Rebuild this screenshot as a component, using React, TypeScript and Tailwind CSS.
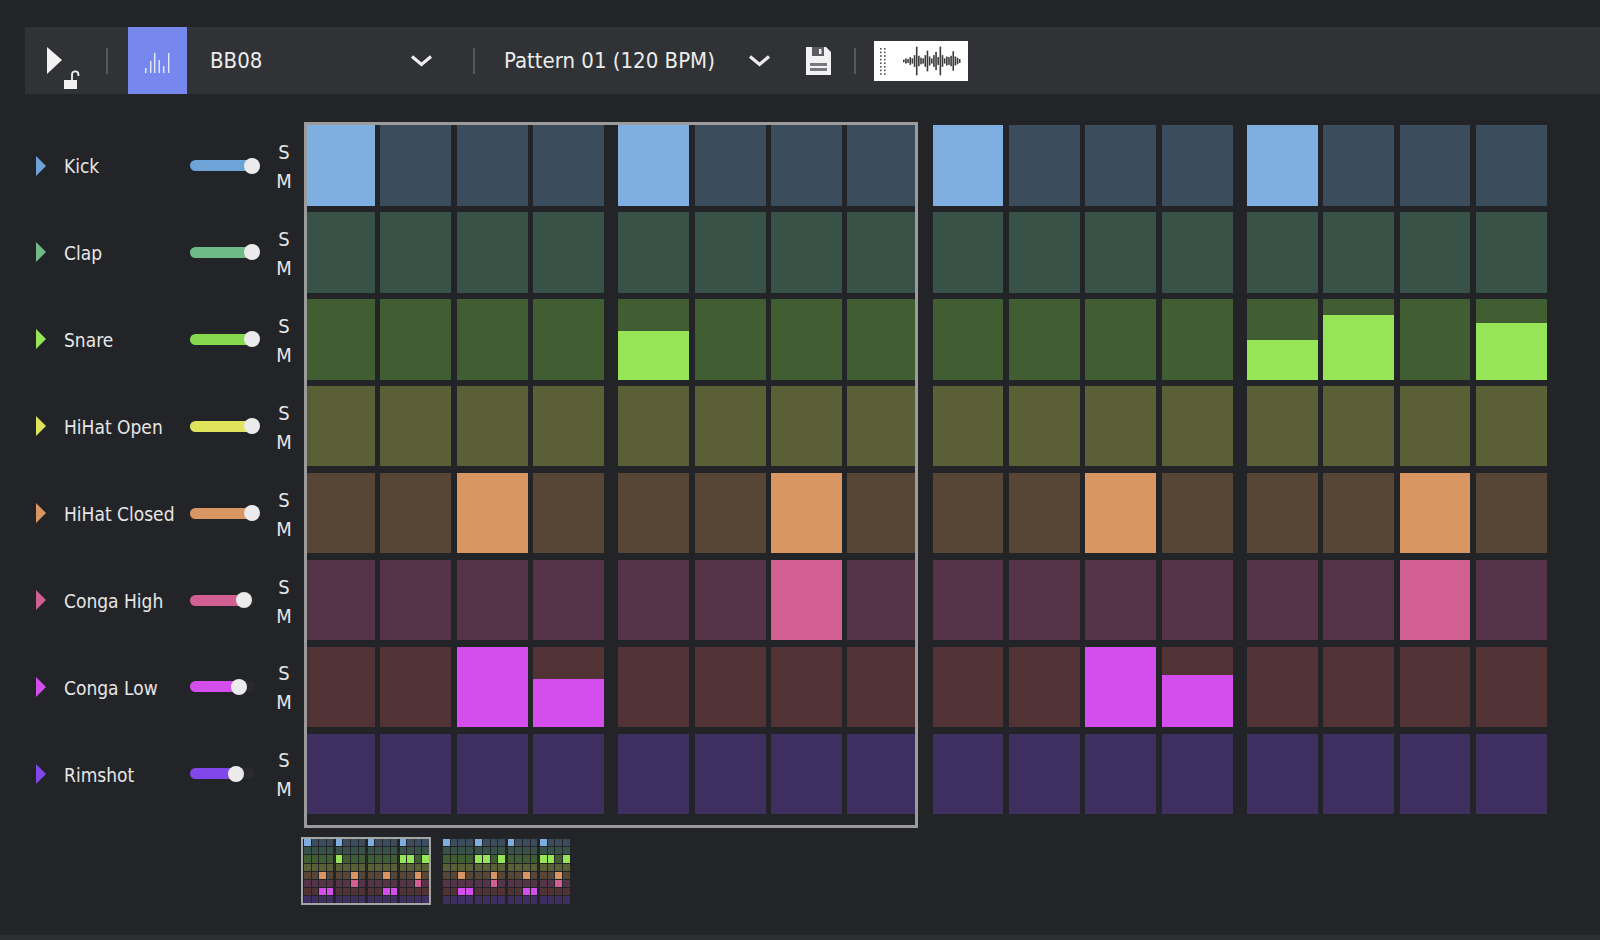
import { Fragment } from 'react';

type Track = {
  name: string;
  dim: string;
  on: string;
  fill: string;
  arrow: string;
  thumb: number; // slider fill width in px
  // step index -> height of the lit part in px
  steps: Record<number, number>;
};

const FULL = 80.4;

const tracks: Track[] = [
  {
    name: 'Kick',
    dim: 'bg-[#3b4c5c]',
    on: 'bg-[#7fafe1]',
    fill: 'bg-[#6ea3d8]',
    arrow: 'text-[#6ea3d8]',
    thumb: 62,
    steps: { 0: FULL, 4: FULL, 8: FULL, 12: FULL }
  },
  {
    name: 'Clap',
    dim: 'bg-[#385248]',
    on: 'bg-[#6fbb88]',
    fill: 'bg-[#6fbb88]',
    arrow: 'text-[#6fbb88]',
    thumb: 62,
    steps: {}
  },
  {
    name: 'Snare',
    dim: 'bg-[#405e32]',
    on: 'bg-[#95e556]',
    fill: 'bg-[#86d94d]',
    arrow: 'text-[#95e556]',
    thumb: 62,
    steps: { 4: 49, 12: 40, 13: 65, 15: 57 }
  },
  {
    name: 'HiHat Open',
    dim: 'bg-[#5a5f36]',
    on: 'bg-[#dfe45c]',
    fill: 'bg-[#dfe45c]',
    arrow: 'text-[#dfe45c]',
    thumb: 62,
    steps: {}
  },
  {
    name: 'HiHat Closed',
    dim: 'bg-[#574536]',
    on: 'bg-[#d99562]',
    fill: 'bg-[#d99562]',
    arrow: 'text-[#d99562]',
    thumb: 62,
    steps: { 2: FULL, 6: FULL, 10: FULL, 14: FULL }
  },
  {
    name: 'Conga High',
    dim: 'bg-[#553349]',
    on: 'bg-[#d15f91]',
    fill: 'bg-[#d15f91]',
    arrow: 'text-[#d15f91]',
    thumb: 54,
    steps: { 6: FULL, 14: FULL }
  },
  {
    name: 'Conga Low',
    dim: 'bg-[#513336]',
    on: 'bg-[#d44eed]',
    fill: 'bg-[#d44eed]',
    arrow: 'text-[#d44eed]',
    thumb: 49,
    steps: { 2: FULL, 3: 48, 10: FULL, 11: 52 }
  },
  {
    name: 'Rimshot',
    dim: 'bg-[#3e2f60]',
    on: 'bg-[#8247ea]',
    fill: 'bg-[#8247ea]',
    arrow: 'text-[#8247ea]',
    thumb: 46,
    steps: {}
  }
];

const bars = [0, 1, 2, 3];
const beats = [0, 1, 2, 3];

function ChevronIcon() {
  return (
    <svg width="23" height="13" viewBox="0 0 23 13" fill="none">
      <path d="M2 2.5 L11.5 10.5 L21 2.5" stroke="#eeeeee" strokeWidth="3.2" />
    </svg>
  );
}

function Separator() {
  return <div className="h-[26px] w-[2px] bg-[#55575c]" />;
}

function BarsIcon() {
  return (
    <svg width="26" height="26" viewBox="0 0 26 26" fill="#e8ebfb">
      <rect x="0" y="20" width="1.4" height="5" />
      <rect x="5" y="13" width="1.4" height="12" />
      <rect x="9" y="5" width="1.4" height="20" />
      <rect x="13.5" y="12" width="1.4" height="13" />
      <rect x="18" y="18" width="1.4" height="7" />
      <rect x="23" y="5" width="1.4" height="20" />
    </svg>
  );
}

function PlayLockIcon() {
  return (
    <svg width="36" height="42" viewBox="0 0 36 42" fill="none">
      <path d="M1 0 L16 13 L1 27 Z" fill="#f2f2f2" />
      <rect x="18" y="33" width="13" height="9" fill="#f2f2f2" />
      <path d="M26 33 V27.5 a3.2 3.2 0 0 1 6.4 0 V29" stroke="#f2f2f2" strokeWidth="1.8" />
    </svg>
  );
}

function SaveIcon() {
  return (
    <svg width="25" height="28" viewBox="0 0 25 28">
      <path d="M0 0 H20 L25 5 V28 H0 Z" fill="#f2f2f2" />
      <path d="M6 0 H18 V9 H6 Z" fill="#5a5c60" />
      <rect x="13" y="2" width="2.5" height="5" fill="#f2f2f2" />
      <rect x="4" y="16" width="17" height="3" fill="#77797d" />
      <rect x="4" y="21" width="17" height="3" fill="#77797d" />
    </svg>
  );
}

function WaveIcon() {
  const spikes = [2, 4, 3, 6, 4, 9, 22, 8, 5, 4, 9, 16, 7, 4, 9, 14, 6, 22, 9, 4, 7, 6, 8, 15, 7, 5, 3];
  return (
    <svg width="82" height="30" viewBox="0 0 82 30">
      {[0, 1, 2, 3, 4, 5, 6, 7].map(i => (
        <Fragment key={i}>
          <rect x="0" y={2 + i * 3.6} width="1.6" height="1.6" fill="#555" />
          <rect x="4" y={2 + i * 3.6} width="1.6" height="1.6" fill="#555" />
        </Fragment>
      ))}
      {spikes.map((h, i) => (
        <rect
          key={i}
          x={23 + i * 2.15}
          y={15 - h * 0.65}
          width="1.6"
          height={h * 1.3}
          fill="#3a3a3a"
        />
      ))}
    </svg>
  );
}

function Toolbar() {
  return (
    <div className="ml-[25px] flex h-[67px] items-center bg-[#303236] text-[#ececec]">
      <div className="mt-[14px] ml-[21px] w-[36px]">
        <PlayLockIcon />
      </div>
      <div className="ml-[24px]">
        <Separator />
      </div>
      <div className="ml-[20px] flex h-full w-[59px] items-center justify-center bg-[#7688ee]">
        <BarsIcon />
      </div>
      <span className="ml-[23px] w-[200px] text-[22px]">BB08</span>
      <ChevronIcon />
      <div className="ml-[40px]">
        <Separator />
      </div>
      <span className="ml-[29px] w-[244px] text-[22px]">Pattern 01 (120 BPM)</span>
      <ChevronIcon />
      <div className="ml-[35px]">
        <SaveIcon />
      </div>
      <div className="ml-[23px]">
        <Separator />
      </div>
      <div className="ml-[18px] flex h-[40px] w-[94px] items-center justify-center bg-white">
        <WaveIcon />
      </div>
    </div>
  );
}

function TrackRow({ track }: { track: Track }) {
  return (
    <div className="flex h-[80.4px] items-center text-[#e6e6e6]">
      <svg className={`ml-[36px] ${track.arrow}`} width="10" height="20" viewBox="0 0 10 20">
        <path d="M0 0 L10 10 L0 20 Z" fill="currentColor" />
      </svg>
      <span className="mt-[2px] ml-[18px] w-[126px] text-[19px] whitespace-nowrap">{track.name}</span>
      <div className="flex h-[11px] w-[65px] items-center rounded-full bg-[#292a2e]">
        <div className={`h-[11px] shrink-0 rounded-full ${track.fill}`} style={{ width: track.thumb }} />
        <div className="ml-[-8px] size-[16px] shrink-0 rounded-full bg-[#ebebeb]" />
      </div>
      <div className="ml-[14px] flex w-[30px] flex-col items-center pt-[3px] text-[20px] leading-[29px]">
        <span>S</span>
        <span>M</span>
      </div>
    </div>
  );
}

function StepGrid() {
  return (
    <div className="relative flex gap-[14.3px]">
      {bars.map(bar => (
        <div key={bar} className="grid w-[300px] grid-cols-4 gap-x-[5.6px] gap-y-[6.5px]">
          {tracks.map(track =>
            beats.map(beat => {
              const height = track.steps[bar * 4 + beat];
              return (
                <div key={track.name + beat} className={`flex h-[80.4px] items-end ${track.dim}`}>
                  {height ? <div className={`w-full ${track.on}`} style={{ height }} /> : null}
                </div>
              );
            })
          )}
        </div>
      ))}
      {/* selection frame over the first two bars */}
      <div className="absolute top-[-3px] left-0 h-[706px] w-[614px] border-[3px] border-[#9b9b9b]" />
    </div>
  );
}

function MiniPattern({ second }: { second?: boolean }) {
  return (
    <div className="flex gap-[2.6px]">
      {bars.map(bar => (
        <div key={bar} className="grid w-[29.7px] grid-cols-4 gap-[1px]">
          {tracks.map(track =>
            beats.map(beat => {
              let lit = track.steps[bar * 4 + beat] !== undefined;
              if (track.name === 'Snare') {
                lit = second
                  ? (bar === 1 || bar === 3) && beat !== 2
                  : (bar === 1 && beat === 0) || (bar === 3 && beat !== 2);
              }
              return (
                <div
                  key={track.name + beat}
                  className={`h-[7.2px] ${lit ? track.on : track.dim}`}
                />
              );
            })
          )}
        </div>
      ))}
    </div>
  );
}

export default function App() {
  return (
    <div
      className="flex h-[940px] w-[1600px] flex-col overflow-hidden bg-[#232428] font-stretch-condensed"
      style={{ fontFamily: '"DejaVu Sans", sans-serif' }}
    >
      <div className="flex-1 pt-[27px]">
        <Toolbar />
        <div className="mt-[31.4px] flex">
          <div className="flex w-[304px] flex-col gap-y-[6.5px]">
            {tracks.map(track => (
              <TrackRow key={track.name} track={track} />
            ))}
          </div>
          <StepGrid />
        </div>
        <div className="mt-[23px] ml-[301px] flex gap-[12px]">
          <div className="h-[68px] w-[130px] overflow-hidden border-2 border-[#a5a5a5] pl-[1px]">
            <MiniPattern />
          </div>
          <div className="pt-[2px]">
            <MiniPattern second />
          </div>
        </div>
      </div>
      <div className="h-[5px] bg-[#2e2f33]" />
    </div>
  );
}
